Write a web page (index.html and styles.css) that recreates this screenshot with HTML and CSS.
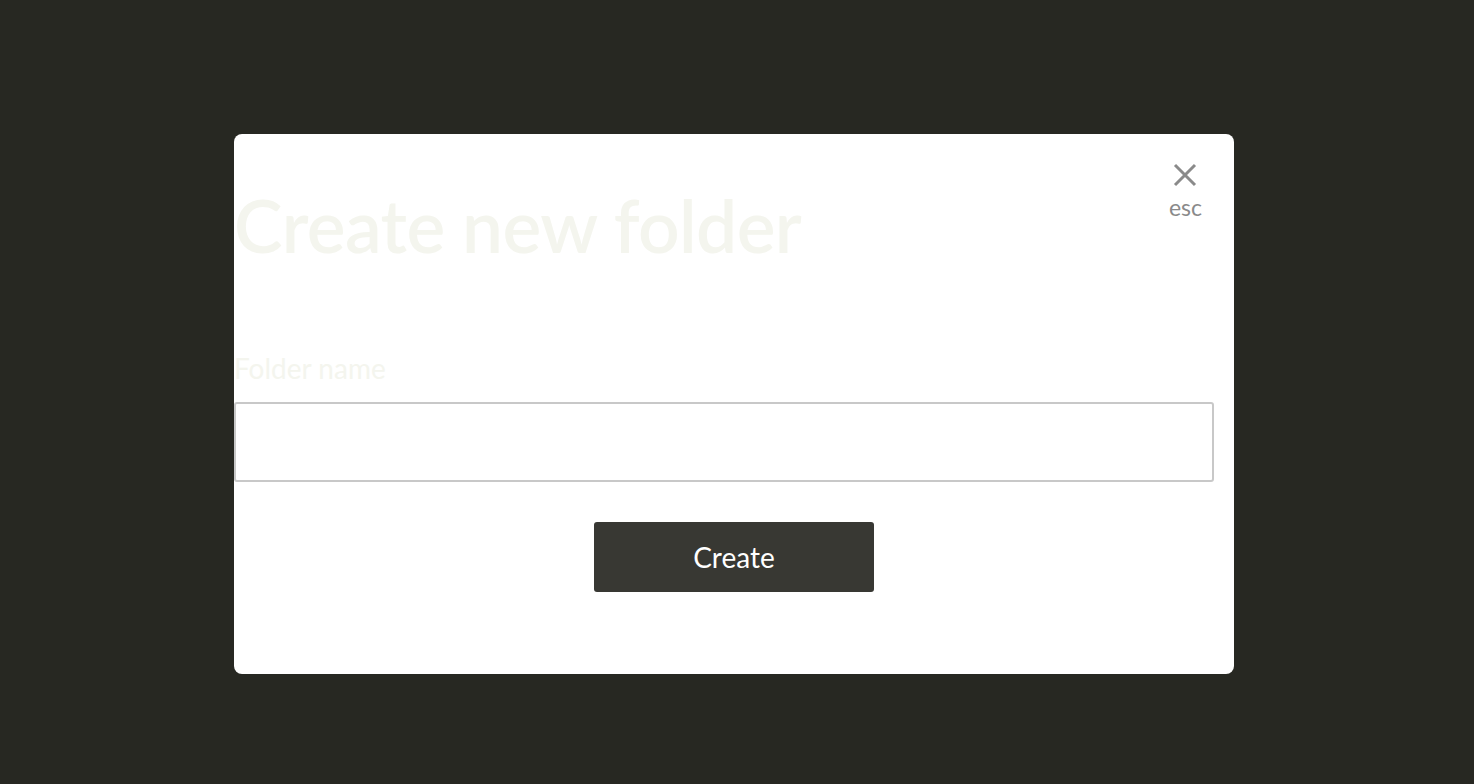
FILE: index.html
```html
<!DOCTYPE html>
<html>
<head>
<meta charset="utf-8">
<link rel="stylesheet" href="styles.css">
</head>
<body>
<div class="overlay">
  <div class="modal">
    <button class="close" type="button">
      <svg class="close-icon" width="24" height="24" viewBox="0 0 24 24"><path d="M2 2 L22 22 M22 2 L2 22" stroke="#8a8a8a" stroke-width="3" fill="none"/></svg>
      <span class="esc">esc</span>
    </button>
    <h1 class="title">Create new folder</h1>
    <label class="label">Folder name</label>
    <input class="input" type="text">
    <div class="actions">
      <button class="create" type="button">Create</button>
    </div>
  </div>
</div>
</body>
</html>
```
FILE: styles.css
```css
html, body {
  margin: 0;
  padding: 0;
  height: 100%;
}
body {
  background: #272822;
  font-family: Lato, "Open Sans", sans-serif;
}
.overlay {
  display: flex;
  justify-content: center;
  padding-top: 134px;
  padding-right: 6px;
}
.modal {
  position: relative;
  width: 1000px;
  height: 540px;
  box-sizing: border-box;
  background: #fff;
  border-radius: 8px;
  padding: 0 20px 0 0;
  display: flex;
  flex-direction: column;
}
.close {
  position: absolute;
  top: 29px;
  right: 32px;
  background: none;
  border: 0;
  padding: 0;
  display: flex;
  flex-direction: column;
  align-items: center;
  cursor: pointer;
  font-family: inherit;
}
.close-icon {
  display: block;
}
.esc {
  color: #8a8a8a;
  font-size: 23px;
  line-height: 24px;
  margin-top: 8px;
}
.title {
  margin: 46px 0 0 0;
  font-size: 73px;
  font-weight: 600;
  line-height: 90px;
  color: #f4f5ee;
  letter-spacing: -0.6px;
}
.label {
  margin-top: 82px;
  font-size: 28px;
  line-height: 32px;
  color: #f4f5ee;
}
.input {
  margin-top: 18px;
  height: 80px;
  box-sizing: border-box;
  border: 2px solid #c8c8c8;
  border-radius: 3px;
  font-family: inherit;
  font-size: 24px;
  padding: 0 16px;
}
.actions {
  display: flex;
  justify-content: center;
  margin-top: 40px;
  padding-left: 20px;
}
.create {
  width: 280px;
  height: 70px;
  background: #383833;
  color: #fff;
  border: 0;
  border-radius: 3px;
  font-family: inherit;
  font-size: 28px;
}
```
